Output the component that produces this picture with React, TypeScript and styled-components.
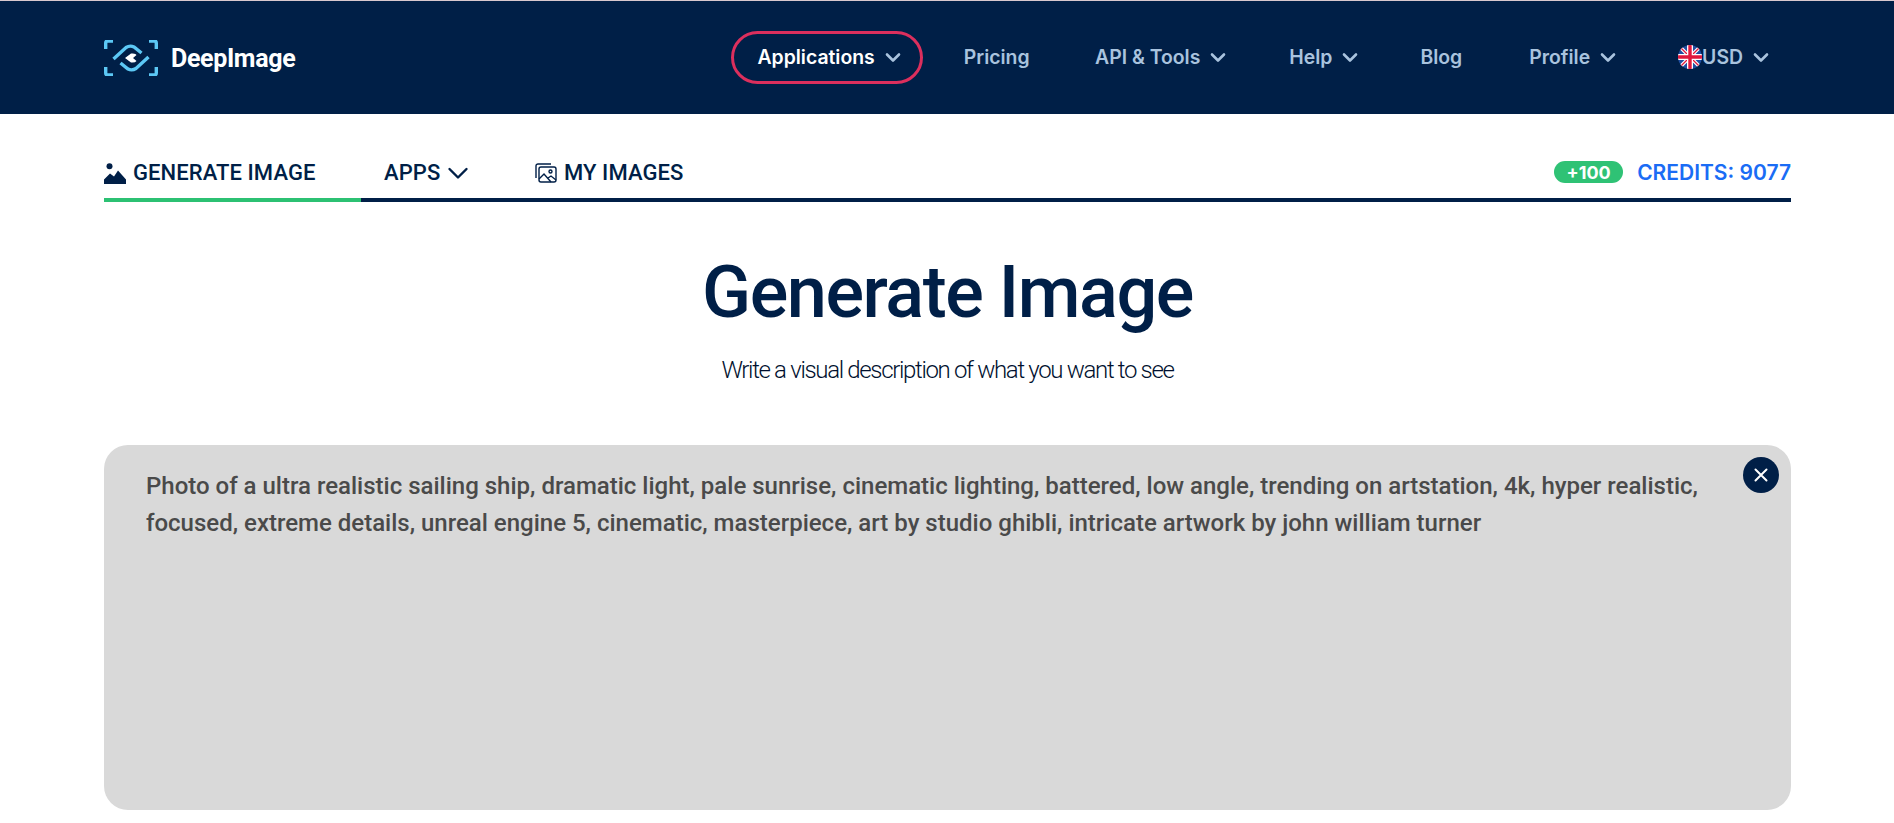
import React from "react";
import styled, { createGlobalStyle } from "styled-components";

const Global = createGlobalStyle`
  html, body { margin: 0; padding: 0; background: #fff; overflow: hidden; }
  body { font-family: "Inter", "Liberation Sans", sans-serif; }
`;
const Page = styled.div`
  width: 1894px;
  height: 823px;
  overflow: hidden;
  background: #fff;
`;
const Header = styled.header`
  height: 114px;
  box-sizing: border-box;
  background: #001f47;
  border-top: 1px solid #d8c8ce;
  padding: 0 103px 0 104px;
  display: flex;
  align-items: center;
  justify-content: space-between;
`;
const Logo = styled.div`
  display: flex;
  align-items: center;
  gap: 13px;
`;
const LogoText = styled.span`
  font-family: "Roboto", sans-serif;
  font-weight: 700;
  font-size: 25px;
  line-height: 30px;
  padding-top: 2px;
  color: #fff;
  letter-spacing: -0.35px;
`;
const Nav = styled.nav`
  display: flex;
  align-items: center;
  margin-top: -1px;
`;
const NavItem = styled.a<{ $active?: boolean; $gap?: number }>`
  display: flex;
  align-items: center;
  gap: 10px;
  height: 53px;
  box-sizing: border-box;
  padding: 0 19px 0 23px;
  margin-left: ${(p) => p.$gap ?? 0}px;
  border-radius: 27px;
  border: 3px solid ${(p) => (p.$active ? "#dc2f5d" : "transparent")};
  font-size: 19.4px;
  font-weight: 600;
  color: ${(p) => (p.$active ? "#fff" : "#a9c3de")};
`;
const Flag = styled.svg`
  width: 24px;
  height: 24px;
  margin-right: -10px;
`;
const Tabs = styled.div`
  margin: 0 103px 0 104px;
  height: 88px;
  box-sizing: border-box;
  border-bottom: 4px solid #001f47;
  display: flex;
  align-items: flex-start;
  justify-content: space-between;
`;
const TabGroup = styled.div`
  display: flex;
  gap: 23px;
`;
const Tab = styled.div<{ $active?: boolean; $w?: number }>`
  width: ${(p) => (p.$w ? `${p.$w}px` : "auto")};
  height: 88px;
  box-sizing: border-box;
  padding: 45px 0 11px;
  display: flex;
  align-items: center;
  gap: 7px;
  font-family: "Roboto", sans-serif;
  font-weight: 500;
  font-size: 22px;
  line-height: 28px;
  letter-spacing: 0.08px;
  color: #001f47;
  border-bottom: 4px solid ${(p) => (p.$active ? "#2cc173" : "transparent")};
`;
const Credits = styled.div`
  display: flex;
  align-items: center;
  gap: 14px;
  height: 28px;
  margin-top: 44px;
`;
const Badge = styled.span`
  width: 69px;
  height: 22px;
  border-radius: 11px;
  background: #2fc275;
  color: #fff;
  font-size: 18px;
  font-weight: 700;
  display: flex;
  align-items: center;
  justify-content: center;
`;
const CreditText = styled.span`
  font-size: 21px;
  font-weight: 600;
  color: #1a6cf5;
`;
const Title = styled.h1`
  margin: 49px 0 0 1px;
  text-align: center;
  font-family: "Roboto", sans-serif;
  font-weight: 500;
  font-size: 72px;
  line-height: 84px;
  letter-spacing: -1.43px;
  color: #001f47;
`;
const Subtitle = styled.p`
  margin: 20px 0 0 1px;
  text-align: center;
  font-family: "Roboto", sans-serif;
  font-weight: 300;
  font-size: 24px;
  line-height: 30px;
  letter-spacing: -1.33px;
  color: #00102e;
`;
const Box = styled.div`
  position: relative;
  margin: 60px 103px 0 104px;
  height: 365px;
  box-sizing: border-box;
  padding: 23px 70px 0 42px;
  border-radius: 24px;
  background: #d9d9d9;
  font-family: "Roboto", sans-serif;
  font-weight: 500;
  font-size: 24px;
  line-height: 37px;
  color: #4a4a4a;
`;
const Close = styled.button`
  position: absolute;
  top: 12px;
  right: 12px;
  width: 36px;
  height: 36px;
  padding: 0;
  border: 0;
  border-radius: 50%;
  background: #001f47;
  display: flex;
  align-items: center;
  justify-content: center;
`;

const Chevron = () => (
  <svg width="16" height="16" viewBox="0 0 16 16" fill="none">
    <path d="M2 5.5 8 11.5l6-6" stroke="#a9c3de" strokeWidth="2.6" strokeLinecap="round" strokeLinejoin="round" />
  </svg>
);

export default function App() {
  return (
    <Page>
      <Global />
      <Header>
        <Logo>
          <svg width="54" height="36" viewBox="4 5 54 36" fill="none" stroke="#5cc8f5" strokeWidth="3.4">
            <path d="M5.7 14V8a2 2 0 0 1 2-2H13M49 6h5.3a2 2 0 0 1 2 2v6M5.7 32v6a2 2 0 0 0 2 2H13M49 40h5.3a2 2 0 0 0 2-2v-6" />
            <path d="M13.5 24 26 12.5Q30 10 34 12L41.5 18M48.5 22 36 33.5Q32 36 28 34L20.5 28" />
            <path d="M25 23 31 18.5Q36 18 36.5 20L33 23 36.5 26Q35 28 31 27.5Z" fill="#fff" stroke="none" />
          </svg>
          <LogoText>DeepImage</LogoText>
        </Logo>
        <Nav>
          <NavItem $active>Applications <Chevron /></NavItem>
          <NavItem $gap={15}>Pricing</NavItem>
          <NavItem $gap={17.5}>API &amp; Tools <Chevron /></NavItem>
          <NavItem $gap={15}>Help <Chevron /></NavItem>
          <NavItem $gap={14}>Blog</NavItem>
          <NavItem $gap={19}>Profile <Chevron /></NavItem>
          <NavItem $gap={14}>
            <Flag viewBox="0 0 24 24">
              <defs><clipPath id="c"><circle cx="12" cy="12" r="12" /></clipPath></defs>
              <g clipPath="url(#c)">
                <rect width="24" height="24" fill="#1f4ea1" />
                <path d="M0 0l24 24M24 0 0 24" stroke="#fff" strokeWidth="3.6" />
                <path d="M0 0l24 24M24 0 0 24" stroke="#e0173c" strokeWidth="1.3" />
                <path d="M12 0v24M0 12h24" stroke="#fff" strokeWidth="6" />
                <path d="M12 0v24M0 12h24" stroke="#e0173c" strokeWidth="3.4" />
              </g>
            </Flag>
            USD <Chevron />
          </NavItem>
        </Nav>
      </Header>
      <Tabs>
        <TabGroup>
          <Tab $active $w={257}>
            <svg width="22" height="21" viewBox="0 0 22 21" fill="#001f47">
              <circle cx="5.5" cy="3.3" r="3" />
              <path d="M0 21V16.5L6 10.5 10 13.5 14 7.5 22 16.5V21Z" />
            </svg>
            GENERATE IMAGE
          </Tab>
          <Tab $w={128}>
            APPS
            <svg width="22" height="28" viewBox="0 0 22 28" fill="none">
              <path d="M2.5 10l8.5 8.5 8.5-8.5" stroke="#001f47" strokeWidth="2.4" strokeLinecap="round" strokeLinejoin="round" />
            </svg>
          </Tab>
          <Tab>
            <svg width="22" height="20" viewBox="0 0 22 20" fill="none" stroke="#001f47" strokeWidth="1.4">
              <path d="M1 15V3a2 2 0 0 1 2-2h13" />
              <rect x="4" y="4" width="17" height="15" rx="2" />
              <circle cx="15.5" cy="8.5" r="1.5" />
              <path d="M4 16l5-5 7 8M13 15l3-2 5 4" />
            </svg>
            MY IMAGES
          </Tab>
        </TabGroup>
        <Credits>
          <Badge>+100</Badge>
          <CreditText>CREDITS: 9077</CreditText>
        </Credits>
      </Tabs>
      <Title>Generate Image</Title>
      <Subtitle>Write a visual description of what you want to see</Subtitle>
      <Box>
        Photo of a ultra realistic sailing ship, dramatic light, pale sunrise, cinematic lighting, battered, low angle, trending on artstation, 4k, hyper realistic, focused, extreme details, unreal engine 5, cinematic, masterpiece, art by studio ghibli, intricate artwork by john william turner
        <Close aria-label="Clear">
          <svg width="16" height="16" viewBox="0 0 16 16">
            <path d="M2.5 2.5l11 11M13.5 2.5l-11 11" stroke="#fff" strokeWidth="2" strokeLinecap="round" />
          </svg>
        </Close>
      </Box>
    </Page>
  );
}
